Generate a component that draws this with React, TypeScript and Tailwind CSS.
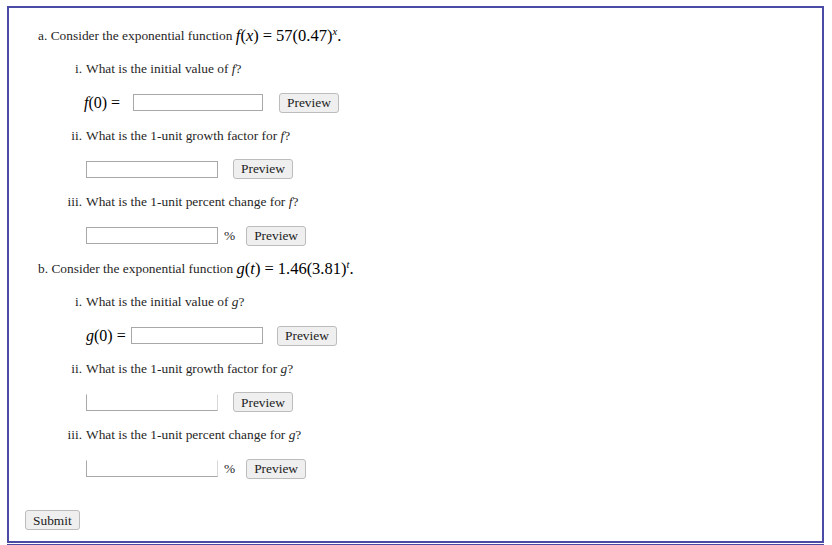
import React from "react";

function Var({ children }: { children: React.ReactNode }) {
  return <i className="italic">{children}</i>;
}

function Eq() {
  return <span className="mx-[4px]">=</span>;
}

function PreviewButton() {
  return (
    <button className="h-[20px] px-[7px] border border-[#bcbcbc] bg-[#efefef] rounded-[3px] text-[13.4px] leading-none text-[#222]">
      Preview
    </button>
  );
}

function Row({ children, className = "" }: { children: React.ReactNode; className?: string }) {
  return <div className={`h-[33.3px] flex items-center ${className}`}>{children}</div>;
}

function Question({ num, children }: { num: string; children: React.ReactNode }) {
  return (
    <Row>
      <span className="w-[77px] text-right pr-[4px]">{num}</span>
      <span>{children}</span>
    </Row>
  );
}

function AnswerInput({ w = "w-[132px]", faded = false }: { w?: string; faded?: boolean }) {
  return (
    <input
      type="text"
      className={`${w} h-[17px] bg-white border border-[#a8a8a8] ${faded ? "border-t-white border-r-[#d8d8d8]" : ""} outline-none`}
    />
  );
}

export default function App() {
  return (
    <div className="bg-white w-[832px] h-[545px] pt-[6px] pl-[7px] text-[#1f1f1f] text-[13.4px] font-['Liberation_Serif','Times_New_Roman',serif]">
      <div className="w-[817px] h-[537px] border-2 border-[#4b4ba6] pt-[11.3px]">
        {/* part a */}
        <Row className="pl-[29px]">
          <span>a. Consider the exponential function&nbsp;</span>
          <span className="text-[16.5px] text-black">
            <Var>f</Var>(<Var>x</Var>)<Eq />57(0.47)<sup className="text-[10.5px] italic">x</sup>.
          </span>
        </Row>
        <Question num="i.">
          What is the initial value of <Var>f</Var>?
        </Question>
        <Row className="pl-[75px] gap-[16px]">
          <span className="flex items-center">
            <span className="w-[49px] text-[16px] text-black whitespace-nowrap">
              <Var>f</Var>(0)<Eq />
            </span>
            <AnswerInput w="w-[130px]" />
          </span>
          <PreviewButton />
        </Row>
        <Question num="ii.">
          What is the 1-unit growth factor for <Var>f</Var>?
        </Question>
        <Row className="pl-[77px] gap-[15px]">
          <AnswerInput />
          <PreviewButton />
        </Row>
        <Question num="iii.">
          What is the 1-unit percent change for <Var>f</Var>?
        </Question>
        <Row className="pl-[77px]">
          <AnswerInput />
          <span className="ml-[6px] mr-[11px]">%</span>
          <PreviewButton />
        </Row>

        {/* part b */}
        <Row className="pl-[29px]">
          <span>b. Consider the exponential function&nbsp;</span>
          <span className="text-[16.5px] text-black">
            <Var>g</Var>(<Var>t</Var>)<Eq />1.46(3.81)<sup className="text-[10.5px] italic">t</sup>.
          </span>
        </Row>
        <Question num="i.">
          What is the initial value of <Var>g</Var>?
        </Question>
        <Row className="pl-[77px] gap-[14px]">
          <span className="flex items-center">
            <span className="w-[45px] text-[16px] text-black whitespace-nowrap">
              <Var>g</Var>(0)<Eq />
            </span>
            <AnswerInput />
          </span>
          <PreviewButton />
        </Row>
        <Question num="ii.">
          What is the 1-unit growth factor for <Var>g</Var>?
        </Question>
        <Row className="pl-[77px] gap-[15px]">
          <AnswerInput faded />
          <PreviewButton />
        </Row>
        <Question num="iii.">
          What is the 1-unit percent change for <Var>g</Var>?
        </Question>
        <Row className="pl-[77px]">
          <AnswerInput faded />
          <span className="ml-[6px] mr-[11px]">%</span>
          <PreviewButton />
        </Row>

        <div className="pl-[16px] mt-[25px]">
          <button className="h-[20px] px-[7px] border border-[#bcbcbc] bg-[#efefef] rounded-[3px] text-[13.4px] leading-none text-[#222]">
            Submit
          </button>
        </div>
      </div>
      <div className="w-[817px] h-[2px] mt-[1px] bg-[#4b4ba6]" />
    </div>
  );
}
